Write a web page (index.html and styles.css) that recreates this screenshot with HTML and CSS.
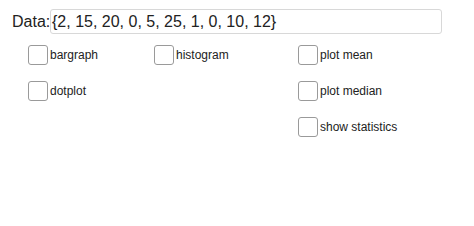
FILE: index.html
```html
<!DOCTYPE html>
<html>
<head>
<meta charset="utf-8">
<link rel="stylesheet" href="styles.css">
</head>
<body>
<div class="app">
  <div class="data-row">
    <span class="data-label">Data:</span>
    <div class="data-input">{2, 15, 20, 0, 5, 25, 1, 0, 10, 12}</div>
  </div>
  <div class="options">
    <label class="opt"><span class="box"></span><span class="txt">bargraph</span></label>
    <label class="opt"><span class="box"></span><span class="txt">histogram</span></label>
    <label class="opt"><span class="box"></span><span class="txt">plot mean</span></label>
    <label class="opt"><span class="box"></span><span class="txt">dotplot</span></label>
    <span class="opt empty"></span>
    <label class="opt"><span class="box"></span><span class="txt">plot median</span></label>
    <span class="opt empty"></span>
    <span class="opt empty"></span>
    <label class="opt"><span class="box"></span><span class="txt">show statistics</span></label>
  </div>
</div>
</body>
</html>
```

FILE: styles.css
```css
html, body {
  margin: 0;
  padding: 0;
  background: #ffffff;
}
body {
  font-family: "Liberation Sans", Arial, sans-serif;
  color: #222222;
}
.app {
  padding: 9px 0 0 12px;
}
.data-row {
  display: flex;
  align-items: center;
}
.data-label {
  font-size: 16px;
  width: 38px;
}
.data-input {
  box-sizing: border-box;
  width: 392px;
  height: 25px;
  border: 1px solid #d8d8d8;
  border-radius: 3px;
  font-size: 16px;
  line-height: 23px;
  padding-left: 1px;
}
.options {
  display: grid;
  grid-template-columns: 126px 144px auto;
  grid-auto-rows: 20px;
  row-gap: 16px;
  padding: 11px 0 0 16px;
}
.opt {
  display: flex;
  align-items: center;
  font-size: 12px;
}
.box {
  box-sizing: border-box;
  width: 20px;
  height: 20px;
  border: 1px solid #9a9a9a;
  border-radius: 3px;
  margin-right: 2px;
  flex: none;
}
.txt {
  line-height: 14px;
}
```
